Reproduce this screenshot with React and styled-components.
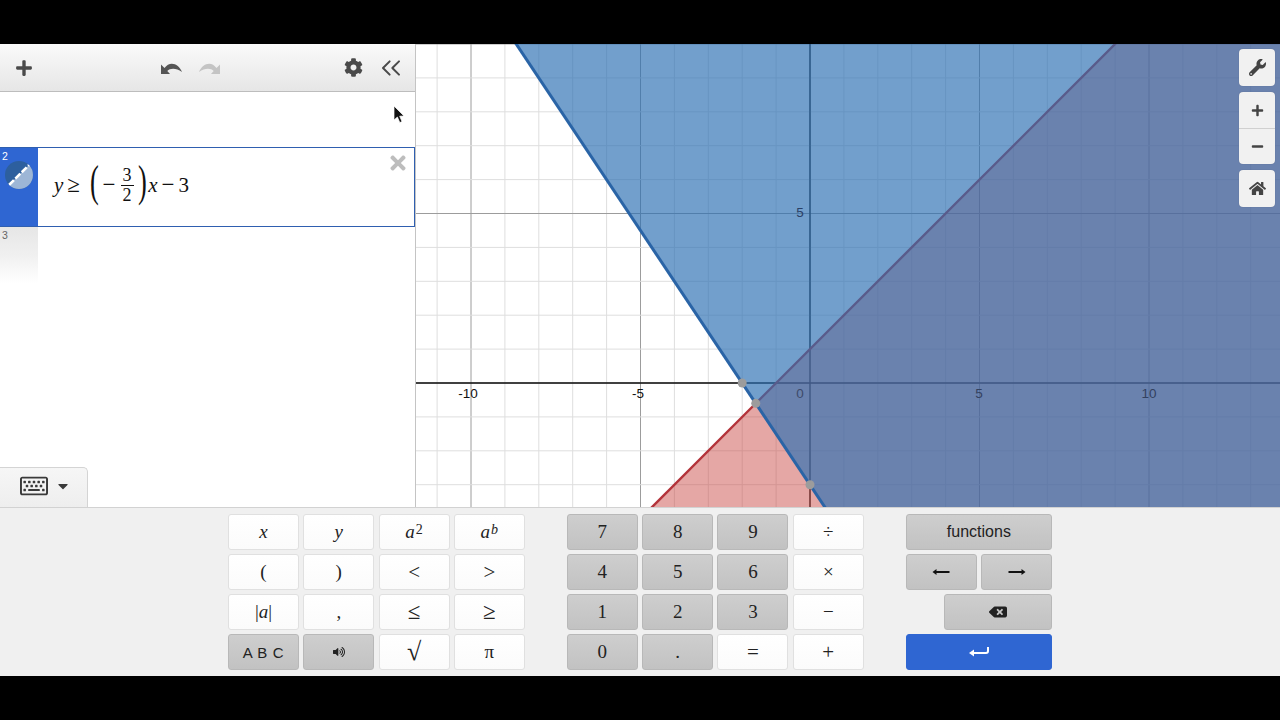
import React from 'react';
import styled, { createGlobalStyle } from 'styled-components';
import {
  FaPlus, FaMinus, FaCog, FaWrench, FaHome, FaTimes,
  FaRegKeyboard, FaCaretDown, FaBackspace, FaVolumeUp,
} from 'react-icons/fa';
import { ChevronsLeft } from 'lucide-react';

const GlobalStyle = createGlobalStyle`
  html, body { margin: 0; padding: 0; background: #000; }
  body { font-family: "Liberation Sans", Arial, sans-serif; }
`;

const Screen = styled.div`
  width: 1280px;
  height: 720px;
  display: flex;
  flex-direction: column;
  overflow: hidden;
  background: #000;
`;

const Letterbox = styled.div`
  height: 44px;
  flex: none;
  background: #000;
`;

const Main = styled.div`
  height: 463px;
  flex: none;
  display: flex;
  position: relative;
  background: #fff;
`;

const Panel = styled.div`
  width: 416px;
  flex: none;
  display: flex;
  flex-direction: column;
  position: relative;
  box-sizing: border-box;
  border-right: 1px solid #c4c4c4;
  background: #fff;
`;

const Toolbar = styled.div`
  height: 48px;
  flex: none;
  box-sizing: border-box;
  display: flex;
  align-items: center;
  padding: 0 8px 0 15px;
  border-bottom: 1px solid #bdbdbd;
  background: linear-gradient(#fafafa, #e6e6e6);
  color: #4a4a4a;
`;

const ToolGroup = styled.div`
  flex: none;
  display: flex;
  align-items: center;
  gap: ${p => p.$gap || 0}px;
  margin-left: ${p => p.$left || 0}px;
`;

const Spacer = styled.div`
  height: 55px;
  flex: none;
`;

const ExprRow = styled.div`
  height: 80px;
  flex: none;
  box-sizing: border-box;
  display: flex;
  position: relative;
  border: 1px solid #2f5fb0;
  border-left: none;
  background: #fff;
`;

const ExprGutter = styled.div`
  width: 38px;
  flex: none;
  position: relative;
  background: #2f66d2;
`;

const RowNumber = styled.span`
  position: absolute;
  left: 2px;
  top: ${p => p.$top}px;
  font-size: 10.5px;
  color: ${p => p.$color};
`;

const Swatch = styled.svg`
  position: absolute;
  left: 5px;
  top: 13px;
`;

const MathLine = styled.div`
  display: flex;
  align-items: center;
  margin: -4px 0 0 16px;
  font-family: "Liberation Serif", "Times New Roman", serif;
  font-size: 21px;
  color: #111;
`;

const Var = styled.i`
  display: inline-block;
`;

const Op = styled.span`
  margin: 0 ${p => p.$space || 0}px;
  font-size: 23px;
`;

const BigParen = styled.span`
  display: inline-block;
  font-size: 44px;
  line-height: 44px;
  transform: scaleX(0.6);
  margin: -6px ${p => p.$after || 0}px 0 ${p => p.$before || 0}px;
`;

const Fraction = styled.span`
  display: inline-flex;
  flex-direction: column;
  align-items: center;
  font-size: 18px;
  line-height: 19px;
  margin: 0 1px 0 4px;
`;

const FracTop = styled.span`
  padding: 0 2px;
  border-bottom: 1px solid #111;
`;

const DeleteBtn = styled.div`
  position: absolute;
  right: 5px;
  top: 4px;
  color: #bdbdbd;
  display: flex;
`;

const EmptyRow = styled.div`
  height: 56px;
  flex: none;
  position: relative;
`;

const FadeGutter = styled.div`
  width: 38px;
  height: 100%;
  background: linear-gradient(#e6e6e6, #f0f0f0 50%, #fff);
`;

const KeyboardTab = styled.div`
  position: absolute;
  left: 0;
  bottom: 0;
  width: 88px;
  height: 40px;
  box-sizing: border-box;
  display: flex;
  align-items: center;
  gap: 7px;
  padding: 0 0 3px 20px;
  background: linear-gradient(#f6f6f6, #eeeeee);
  border: 1px solid #d4d4d4;
  border-left: none;
  border-bottom: none;
  border-top-right-radius: 5px;
  color: #3a3a3a;
`;

const MouseCursor = styled.svg`
  position: absolute;
  left: 393px;
  top: 61px;
  z-index: 5;
`;

const Graph = styled.div`
  flex: 1;
  position: relative;
  overflow: hidden;
`;

const GraphSvg = styled.svg`
  display: block;
  font-family: "Liberation Sans", Arial, sans-serif;
`;

const GraphTools = styled.div`
  position: absolute;
  top: 5px;
  right: 5px;
  display: flex;
  flex-direction: column;
  gap: 6px;
`;

const ToolCard = styled.div`
  width: 36px;
  border-radius: 4px;
  background: #f1f1f1;
  box-shadow: 0 0 1px rgba(0, 0, 0, 0.25);
  color: #444;
  display: flex;
  flex-direction: column;
`;

const ToolButton = styled.div`
  height: ${p => p.$h || 37}px;
  display: flex;
  align-items: center;
  justify-content: center;
  & + & { border-top: 1px solid #d0d0d0; }
`;

const Keypad = styled.div`
  height: 169px;
  flex: none;
  box-sizing: border-box;
  display: flex;
  justify-content: center;
  gap: 42px;
  padding-top: 6px;
  border-top: 1px solid #d2d2d2;
  background: #f0f0f0;
`;

const KeyGrid = styled.div`
  display: grid;
  grid-template-columns: repeat(${p => p.$cols}, 71px);
  grid-auto-rows: 36px;
  column-gap: 4.3px;
  row-gap: 4px;
`;

const Key = styled.div`
  box-sizing: border-box;
  display: flex;
  align-items: center;
  justify-content: center;
  border-radius: 3px;
  grid-column: ${p => p.$span ? '1 / -1' : 'auto'};
  margin-left: ${p => p.$inset || 0}px;
  font-family: ${p => p.$sans ? '"Liberation Sans", Arial, sans-serif' : '"Liberation Serif", "Times New Roman", serif'};
  font-size: ${p => p.$size || 19}px;
  letter-spacing: ${p => p.$track || 0}px;
  color: ${p => p.$variant === 'blue' ? '#fff' : '#222'};
  border: 1px solid ${p => p.$variant === 'gray' ? '#b8b8b8' : p.$variant === 'blue' ? '#2f66d2' : '#e0e0e0'};
  background: ${p => p.$variant === 'gray'
    ? 'linear-gradient(#cecece, #c2c2c2)'
    : p.$variant === 'blue' ? '#2f66d2' : 'linear-gradient(#fff, #fbfbfb)'};
`;

const Sup = styled.sup`
  font-size: 14px;
  line-height: 0;
  position: relative;
  top: -2px;
  margin-left: 1px;
  font-style: ${p => p.$italic ? 'italic' : 'normal'};
`;

const W = 864;
const H = 463;
const ORIGIN_X = 394;
const ORIGIN_Y = 339;
const UNIT = 33.9;

const px = x => ORIGIN_X + x * UNIT;
const py = y => ORIGIN_Y - y * UNIT;
const range = (a, b) => Array.from({ length: b - a + 1 }, (_, i) => a + i);

const xTicks = [[-10, 52], [-5, 222], [5, 563], [10, 733]];

function GraphPaper() {
  const pts = list => list.map(([x, y]) => `${px(x)},${py(y)}`).join(' ');
  // y <= x + 1, clipped to the view
  const red = pts([[-5.2, -4.2], [-1.6, -0.6], [0.53, -3.8]]);
  const redOverlap = pts([[-1.6, -0.6], [10.1, 11.1], [14, 11.1], [14, -4.2], [0.8, -4.2]]);
  // y >= -1.5x - 3
  const blue = pts([[-9, 10.5], [14, 10.5], [14, -5], [1.33, -5]]);

  return (
    <GraphSvg width={W} height={H} viewBox={`0 0 ${W} ${H}`}>
      {range(-12, 14).map(i => (
        <line key={'v' + i} x1={px(i)} x2={px(i)} y1={0} y2={H}
          stroke={i % 5 === 0 ? '#9c9c9c' : '#dedede'} strokeWidth="1" />
      ))}
      {range(-4, 10).map(i => (
        <line key={'h' + i} y1={py(i)} y2={py(i)} x1={0} x2={W}
          stroke={i % 5 === 0 ? '#9c9c9c' : '#dedede'} strokeWidth="1" />
      ))}
      <line x1={0} x2={W} y1={ORIGIN_Y} y2={ORIGIN_Y} stroke="#111" strokeWidth="1.3" />
      <line x1={ORIGIN_X} x2={ORIGIN_X} y1={0} y2={H} stroke="#111" strokeWidth="1.3" />

      <polygon points={red} fill="#c74440" fillOpacity="0.47" />
      <polygon points={redOverlap} fill="#c74440" fillOpacity="0.47" />
      <line x1={px(-5.2)} y1={py(-4.2)} x2={px(10.1)} y2={py(11.1)} stroke="#b3333a" strokeWidth="2.4" />

      <polygon points={blue} fill="#2d70b3" fillOpacity="0.67" />
      <line x1={px(-9)} y1={py(10.5)} x2={px(1.33)} y2={py(-5)} stroke="#2a64a6" strokeWidth="3" />

      {xTicks.map(([v, x]) => (
        <text key={v} x={x} y={354} fontSize="13.5" textAnchor="middle"
          fill={v > 0 ? '#33415f' : '#111'}>{v}</text>
      ))}
      <text x={384} y={354} fontSize="13.5" textAnchor="middle" fill="#3d4a6a">0</text>
      <text x={384} y={173} fontSize="13.5" textAnchor="middle" fill="#2a3f66">5</text>

      <circle cx={px(-2)} cy={py(0)} r="4.5" fill="#9c9c9c" />
      <circle cx={px(-1.6)} cy={py(-0.6)} r="4.5" fill="#9c9c9c" />
      <circle cx={px(0)} cy={py(-3)} r="4.5" fill="#9c9c9c" />
    </GraphSvg>
  );
}

function UndoIcon({ flip, color }) {
  return (
    <svg width="21" height="14" viewBox="0 0 21 14" style={flip ? { transform: 'scaleX(-1)' } : undefined}>
      <path d="M0 3.5 L0 13 L9 13 L6.3 10 C9 7 15 6.5 21 11 C18 3 9 -1 3.5 7 Z" fill={color} />
    </svg>
  );
}

function ArrowIcon({ right }) {
  return (
    <svg width="18" height="8" viewBox="0 0 18 8" style={right ? { transform: 'scaleX(-1)' } : undefined}>
      <path d="M0.5 4 L4.5 1 L4.5 3 L17.5 3 L17.5 5 L4.5 5 L4.5 7 Z" fill="#111" />
    </svg>
  );
}

const rows = [
  [
    { label: <i>x</i> }, { label: <i>y</i> },
    { label: <><i>a</i><Sup>2</Sup></> }, { label: <><i>a</i><Sup $italic>b</Sup></> },
    { label: '(' }, { label: ')' }, { label: '<', size: 21 }, { label: '>', size: 21 },
    { label: <>|<i>a</i>|</> }, { label: ',' }, { label: '≤', size: 23 }, { label: '≥', size: 23 },
    { label: 'A B C', variant: 'gray', sans: true, size: 15, track: 0.6 },
    { label: <FaVolumeUp size={12} />, variant: 'gray' },
    { label: '√', size: 26 }, { label: 'π' },
  ],
  [
    { label: '7', variant: 'gray' }, { label: '8', variant: 'gray' }, { label: '9', variant: 'gray' }, { label: '÷' },
    { label: '4', variant: 'gray' }, { label: '5', variant: 'gray' }, { label: '6', variant: 'gray' }, { label: '×' },
    { label: '1', variant: 'gray' }, { label: '2', variant: 'gray' }, { label: '3', variant: 'gray' }, { label: '−' },
    { label: '0', variant: 'gray' }, { label: '.', variant: 'gray' }, { label: '=', size: 21 }, { label: '+', size: 21 },
  ],
];

export default function App() {
  return (
    <Screen>
      <GlobalStyle />
      <Letterbox />
      <Main>
        <Panel>
          <Toolbar>
            <ToolGroup><FaPlus size={18} /></ToolGroup>
            <ToolGroup $gap={17} $left={128}>
              <UndoIcon color="#555" />
              <UndoIcon flip color="#c4c4c4" />
            </ToolGroup>
            <ToolGroup $gap={12} $left={124}>
              <FaCog size={19} />
              <ChevronsLeft size={32} strokeWidth={1.5} />
            </ToolGroup>
          </Toolbar>
          <Spacer />
          <ExprRow>
            <ExprGutter>
              <RowNumber $top={2} $color="#fff">2</RowNumber>
              <Swatch width="28" height="28" viewBox="0 0 28 28">
                <defs>
                  <clipPath id="swatch-clip"><circle cx="14" cy="14" r="14" /></clipPath>
                </defs>
                <g clipPath="url(#swatch-clip)">
                  <rect width="28" height="28" fill="#2d5f9e" />
                  <polygon points="0,28 28,0 28,28" fill="#9db6d6" />
                  <line x1="4" y1="24" x2="25" y2="3" stroke="#fff" strokeWidth="2.6" strokeDasharray="7 2" />
                </g>
              </Swatch>
            </ExprGutter>
            <MathLine>
              <Var>y</Var>
              <Op $space={4}>≥</Op>
              <BigParen $before={3}>(</BigParen>
              <Op $space={1}>−</Op>
              <Fraction>
                <FracTop>3</FracTop>
                <span>2</span>
              </Fraction>
              <BigParen $after={-1}>)</BigParen>
              <Var>x</Var>
              <Op $space={4}>−</Op>
              <span>3</span>
            </MathLine>
            <DeleteBtn><FaTimes size={22} /></DeleteBtn>
          </ExprRow>
          <EmptyRow>
            <FadeGutter />
            <RowNumber $top={2} $color="#666">3</RowNumber>
          </EmptyRow>
          <KeyboardTab>
            <FaRegKeyboard size={28} />
            <FaCaretDown size={16} />
          </KeyboardTab>
        </Panel>
        <Graph>
          <GraphPaper />
          <GraphTools>
            <ToolCard><ToolButton><FaWrench size={17} /></ToolButton></ToolCard>
            <ToolCard>
              <ToolButton $h={36}><FaPlus size={13} /></ToolButton>
              <ToolButton $h={35}><FaMinus size={13} /></ToolButton>
            </ToolCard>
            <ToolCard><ToolButton><FaHome size={17} /></ToolButton></ToolCard>
          </GraphTools>
        </Graph>
        <MouseCursor width="12" height="19" viewBox="0 0 12 19">
          <path d="M1 1 L1 15 L4.4 12 L6.8 17.6 L9 16.6 L6.7 11.2 L11 11 Z" fill="#111" stroke="#fff" strokeWidth="0.7" />
        </MouseCursor>
      </Main>
      <Keypad>
        {rows.map((keys, i) => (
          <KeyGrid key={i} $cols={4}>
            {keys.map((k, j) => (
              <Key key={j} $variant={k.variant} $sans={k.sans} $size={k.size} $track={k.track}>{k.label}</Key>
            ))}
          </KeyGrid>
        ))}
        <KeyGrid $cols={2}>
          <Key $span $sans $size={16} $variant="gray">functions</Key>
          <Key $variant="gray"><ArrowIcon /></Key>
          <Key $variant="gray"><ArrowIcon right /></Key>
          <Key $span $inset={38} $variant="gray"><FaBackspace size={18} /></Key>
          <Key $span $variant="blue">
            <svg width="22" height="14" viewBox="0 0 22 14">
              <path d="M20 2 L20 6 Q20 8 18 8 L4 8" fill="none" stroke="#fff" strokeWidth="2" />
              <path d="M6 4.5 L1 8 L6 11.5 Z" fill="#fff" />
            </svg>
          </Key>
        </KeyGrid>
      </Keypad>
      <Letterbox />
    </Screen>
  );
}
